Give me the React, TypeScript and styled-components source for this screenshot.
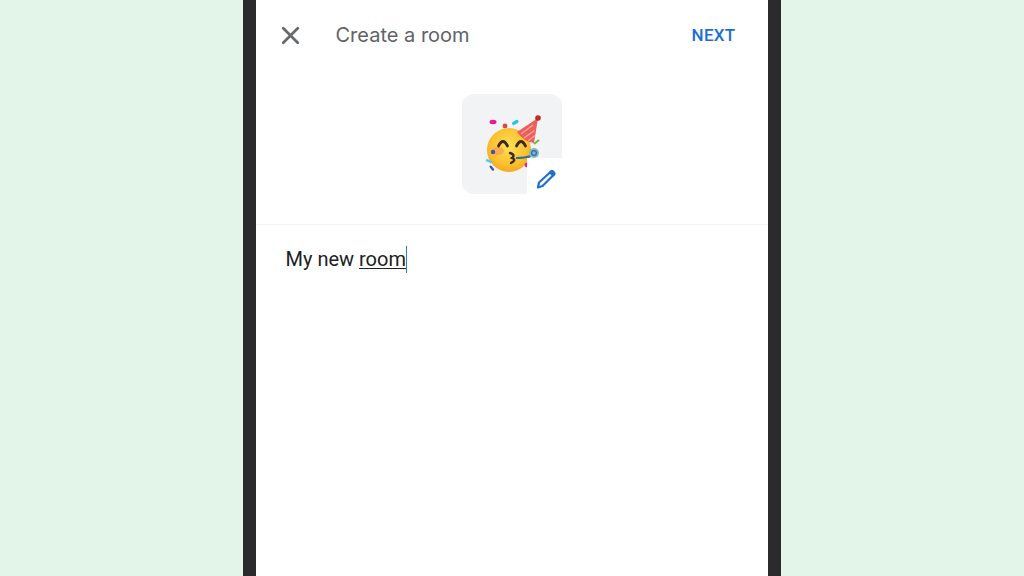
import React from 'react'
import styled, { createGlobalStyle } from 'styled-components'
import { X } from 'lucide-react'

const GlobalStyle = createGlobalStyle`
    html, body {
        margin: 0;
        padding: 0;
        height: 100%;
        background: #e3f5e9;
        overflow: hidden;
    }
    #root {
        height: 100%;
    }
`

const Page = styled.div`
    height: 576px;
    display: flex;
    justify-content: center;
    background: #e3f5e9;
`
const Phone = styled.div`
    width: 512px;
    margin-left: -1px;
    border-left: 13px solid #2b2b2d;
    border-right: 13px solid #2b2b2d;
    background: #fff;
    display: flex;
    flex-direction: column;
`
const Header = styled.div`
    height: 70px;
    display: flex;
    align-items: center;
    padding: 0 32px 0 24px;
    flex-shrink: 0;
`
const CloseButton = styled.div`
    width: 22px;
    height: 22px;
    color: #666a6d;
    display: flex;
    align-items: center;
    justify-content: center;

    svg {
        flex-shrink: 0;
    }
`
const Title = styled.div`
    margin-left: 34px;
    flex: 1;
    font-family: Inter, "Open Sans", sans-serif;
    font-size: 20px;
    color: #5f6368;
`
const NextButton = styled.div`
    font-family: Roboto, "Liberation Sans", sans-serif;
    font-weight: 500;
    font-size: 17px;
    letter-spacing: 0.3px;
    color: #1a6fd4;
`
const IconSection = styled.div`
    height: 155px;
    padding-top: 24px;
    box-sizing: border-box;
    display: flex;
    justify-content: center;
    border-bottom: 1px solid #f1f3f4;
    flex-shrink: 0;
`
const IconTile = styled.div`
    position: relative;
    width: 100px;
    height: 100px;
    border-radius: 12px;
    background: #f1f3f4;
    display: flex;
    align-items: center;
    justify-content: center;
`
const EditBadge = styled.div`
    position: absolute;
    right: 0;
    bottom: 0;
    width: 35px;
    height: 36px;
    box-sizing: border-box;
    padding: 6px 0 0 4px;
    background: #fff;
    display: flex;
    align-items: center;
    justify-content: center;
`
const NameRow = styled.div`
    padding: 21px 30px 0;
    font-family: Roboto, "Liberation Sans", sans-serif;
    font-size: 20px;
    line-height: 24px;
    color: #202124;
`
const Composing = styled.span`
    text-decoration: underline;
    text-decoration-thickness: 1px;
    text-underline-offset: 2px;
    border-right: 1.5px solid #2f7fc4;
    display: inline-block;
    line-height: 27px;
`

const PartyEmoji = () => (
    <svg width="62" height="62" viewBox="0 0 62 62">
        <defs>
            <radialGradient id="face" cx="0.5" cy="0.42" r="0.6">
                <stop offset="0" stopColor="#fde15a" />
                <stop offset="0.7" stopColor="#fbc02d" />
                <stop offset="1" stopColor="#f5a623" />
            </radialGradient>
        </defs>
        {/* confetti */}
        <ellipse cx="12" cy="9" rx="3.5" ry="2.2" fill="#e91e8c" />
        <rect x="31" y="8" width="7" height="3.4" rx="1.7" fill="#26c6da" transform="rotate(-30 34 10)" />
        <circle cx="24" cy="13" r="2.4" fill="#d84a3f" />
        {/* face */}
        <circle cx="28" cy="37" r="22" fill="url(#face)" />
        <ellipse cx="17" cy="38" rx="6" ry="4" fill="#f58a5c" opacity="0.5" />
        {/* party hat */}
        <path d="M36 19 L57 5 L53 30 Q43 29 36 19 Z" fill="#ee5f5b" />
        <path d="M40 21 L52 12 M43 25 L53.500 17.500 M47 28 L54 22.500" stroke="#f7a79e" strokeWidth="1.400" fill="none" />
        <circle cx="57" cy="5" r="2.800" fill="#c62828" />
        <path d="M53 31 L58 27" stroke="#7cb342" strokeWidth="2.200" />
        {/* eyes */}
        <path d="M17.500 33 Q22 24 26.500 33" stroke="#3c2a1a" strokeWidth="2.800" fill="none" strokeLinecap="round" />
        <path d="M35.500 33 Q40 24 44.500 33" stroke="#3c2a1a" strokeWidth="2.800" fill="none" strokeLinecap="round" />
        {/* mouth */}
        <path d="M29 40 Q35 42 31 45 Q36 47 30 50" stroke="#3c2a1a" strokeWidth="2.400" fill="none" strokeLinecap="round" />
        {/* blower */}
        <path d="M35 45 Q44 45 50 43" stroke="#2f6f9f" strokeWidth="2.200" fill="none" />
        <circle cx="53" cy="40" r="5" fill="#7fb8c9" />
        <circle cx="53" cy="40" r="2.400" fill="none" stroke="#2f6f9f" strokeWidth="1.300" />
        {/* lower confetti */}
        <circle cx="12" cy="39" r="2.200" fill="#3f51b5" />
        <rect x="5" y="47" width="6" height="2.400" fill="#4dd0e1" transform="rotate(25 8 48)" />
        <rect x="8" y="54" width="6" height="2.400" rx="1.200" fill="#3f51b5" transform="rotate(50 11 55)" />
        <circle cx="46" cy="52" r="2.400" fill="#e91e8c" />
    </svg>
)

const PencilIcon = () => (
    <svg width="22" height="22" viewBox="0 0 22 22">
        <path d="M16 3.500 L19 6.500 L7.500 18 L3 19.500 L4 14.500 Z" fill="#fff" stroke="#1f6fd0" strokeWidth="2.200" strokeLinejoin="round" />
        <path d="M15.500 2.500 Q17 1 18.500 2.500 L20 4 Q21.500 5.500 20 7 L18 9 L13.500 4.500 Z" fill="#1f6fd0" />
    </svg>
)

const App = () => {
    return (
        <Page>
            <GlobalStyle />
            <Phone>
                <Header>
                    <CloseButton>
                        <X size={29} strokeWidth={2.3} />
                    </CloseButton>
                    <Title>Create a room</Title>
                    <NextButton>NEXT</NextButton>
                </Header>
                <IconSection>
                    <IconTile>
                        <PartyEmoji />
                        <EditBadge>
                            <PencilIcon />
                        </EditBadge>
                    </IconTile>
                </IconSection>
                <NameRow>
                    My new <Composing>room</Composing>
                </NameRow>
            </Phone>
        </Page>
    )
}

export default App
